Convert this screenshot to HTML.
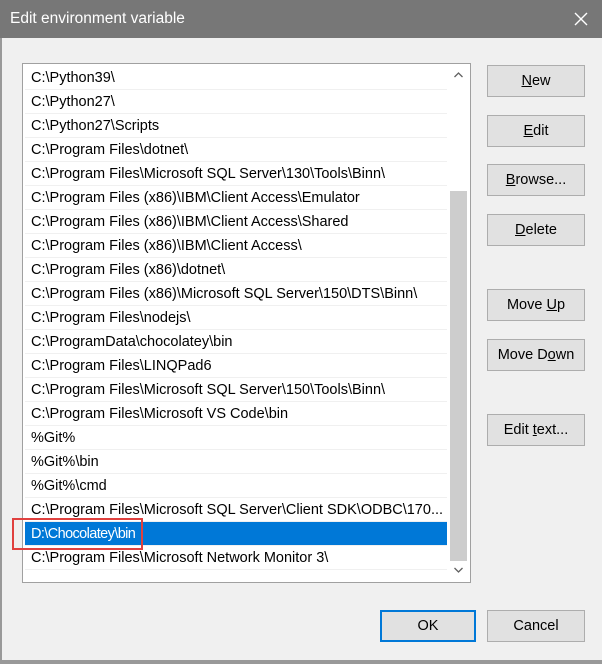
<!DOCTYPE html>
<html><head><style>
*{margin:0;padding:0;box-sizing:border-box}
body{width:602px;height:664px;background:#f0f0f0;font-family:"Liberation Sans",sans-serif;position:relative;overflow:hidden}
.title{position:absolute;left:0;top:0;width:602px;height:38px;background:#777;color:#fff;font-size:15.5px}
.title span{position:absolute;left:10px;top:10px}
.lstrip{position:absolute;left:0;top:38px;width:2px;height:626px;background:#999}
.list{position:absolute;left:22px;top:63px;width:449px;height:520px;background:#fff;border:1px solid #a0a0a0}
.row{position:absolute;left:2px;width:422px;height:24px;border-bottom:1px solid #f0f0f0;font-size:14.5px;color:#000;padding-left:6px;line-height:25px;white-space:nowrap;overflow:hidden}
.sel{background:#0078d7;color:#fff}
.sb{position:absolute;left:425px;top:0;width:20px;height:518px;background:#fff}
.thumb{position:absolute;left:2px;top:127px;width:17px;height:370px;background:#cdcdcd}
.btn{position:absolute;left:487px;width:98px;height:32px;background:#e1e1e1;border:1px solid #adadad;font-size:14.5px;text-align:center;line-height:31px;color:#000}
.red{position:absolute;left:12px;top:518px;width:131px;height:32px;border:2px solid #e0413f}
.bot{position:absolute;left:0;top:660px;width:602px;height:4px;background:#999}
</style></head><body>
<div class="title"><span>Edit environment variable</span>
<svg style="position:absolute;left:574px;top:12px" width="14" height="14" viewBox="0 0 14 14"><path d="M1 1L13 13M13 1L1 13" stroke="#fff" stroke-width="1.4"/></svg></div>
<div class="lstrip"></div>
<div class="list">
<div class="row" style="top:2px">C:\Python39\</div>
<div class="row" style="top:26px">C:\Python27\</div>
<div class="row" style="top:50px">C:\Python27\Scripts</div>
<div class="row" style="top:74px">C:\Program Files\dotnet\</div>
<div class="row" style="top:98px">C:\Program Files\Microsoft SQL Server\130\Tools\Binn\</div>
<div class="row" style="top:122px">C:\Program Files (x86)\IBM\Client Access\Emulator</div>
<div class="row" style="top:146px">C:\Program Files (x86)\IBM\Client Access\Shared</div>
<div class="row" style="top:170px">C:\Program Files (x86)\IBM\Client Access\</div>
<div class="row" style="top:194px">C:\Program Files (x86)\dotnet\</div>
<div class="row" style="top:218px">C:\Program Files (x86)\Microsoft SQL Server\150\DTS\Binn\</div>
<div class="row" style="top:242px">C:\Program Files\nodejs\</div>
<div class="row" style="top:266px">C:\ProgramData\chocolatey\bin</div>
<div class="row" style="top:290px">C:\Program Files\LINQPad6</div>
<div class="row" style="top:314px">C:\Program Files\Microsoft SQL Server\150\Tools\Binn\</div>
<div class="row" style="top:338px">C:\Program Files\Microsoft VS Code\bin</div>
<div class="row" style="top:362px">%Git%</div>
<div class="row" style="top:386px">%Git%\bin</div>
<div class="row" style="top:410px">%Git%\cmd</div>
<div class="row" style="top:434px">C:\Program Files\Microsoft SQL Server\Client SDK\ODBC\170...</div>
<div class="row sel" style="top:458px"><span style="letter-spacing:-0.6px">D:\Chocolatey\bin</span></div>
<div class="row" style="top:482px">C:\Program Files\Microsoft Network Monitor 3\</div>
<div class="sb"><div class="thumb"></div>
<svg style="position:absolute;left:6px;top:8px" width="9" height="6" viewBox="0 0 9 6"><path d="M0.5 5L4.5 1L8.5 5" stroke="#606060" stroke-width="1.3" fill="none"/></svg>
<svg style="position:absolute;left:6px;top:503px" width="9" height="6" viewBox="0 0 9 6"><path d="M0.5 1L4.5 5L8.5 1" stroke="#606060" stroke-width="1.3" fill="none"/></svg>
</div>
</div>
<div class="red"></div>
<div class="btn" style="top:65px"><u>N</u>ew</div>
<div class="btn" style="top:115px"><u>E</u>dit</div>
<div class="btn" style="top:164px"><u>B</u>rowse...</div>
<div class="btn" style="top:214px"><u>D</u>elete</div>
<div class="btn" style="top:289px">Move <u>U</u>p</div>
<div class="btn" style="top:339px">Move D<u>o</u>wn</div>
<div class="btn" style="top:414px">Edit <u>t</u>ext...</div>
<div class="btn" style="left:380px;top:610px;width:96px;border:2px solid #0078d7;line-height:29px">OK</div>
<div class="btn" style="top:610px">Cancel</div>
<div class="bot"></div>
</body></html>
